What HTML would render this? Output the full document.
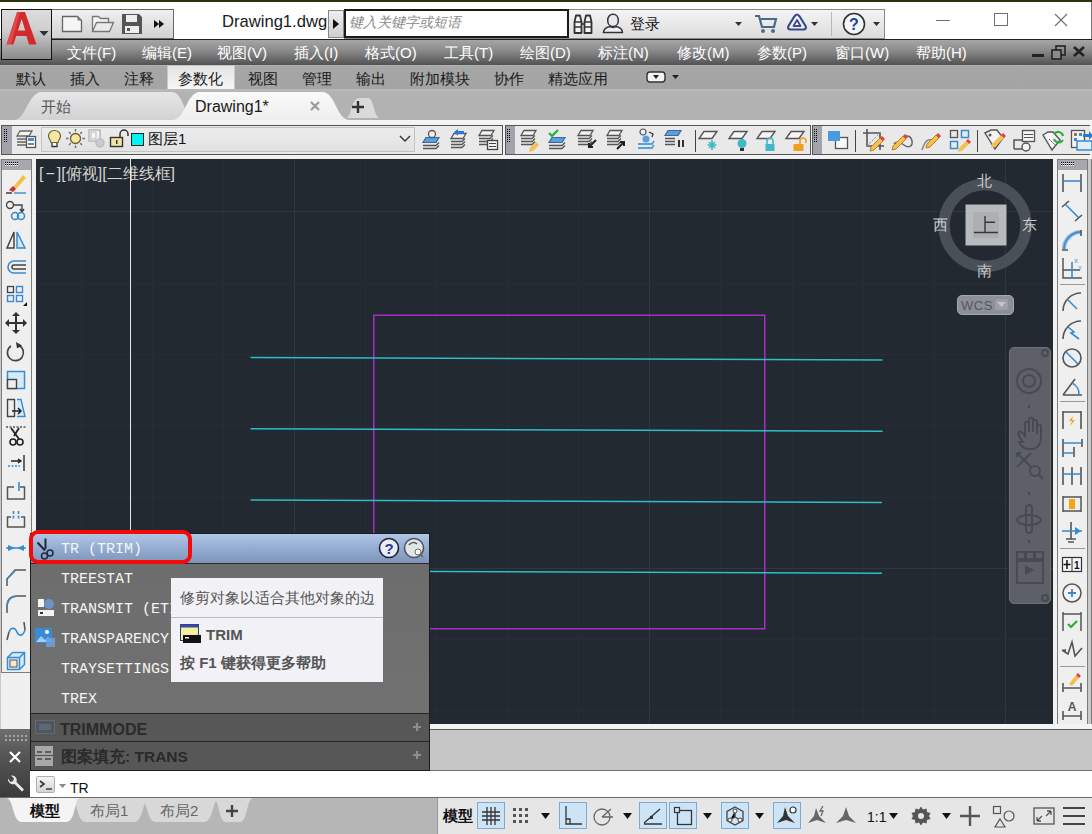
<!DOCTYPE html>
<html><head><meta charset="utf-8">
<style>
*{margin:0;padding:0;box-sizing:border-box}
html,body{width:1092px;height:834px;overflow:hidden;background:#c8c8c8;font-family:"Liberation Sans",sans-serif}
.a{position:absolute}
.t{position:absolute;white-space:nowrap;line-height:1}
svg{position:absolute;overflow:visible}
#top{left:0;top:0;width:1092px;height:2px;background:#2c3310}
#title{left:0;top:2px;width:1092px;height:37px;background:#fff}
#logo{left:1px;top:9px;width:51px;height:51px;border:1.5px solid #111;background:linear-gradient(#dcdcdc,#cfcfcf 40%,#8a8a8a)}
#qat{left:52px;top:9px;width:122px;height:30px;border:1px solid #666;border-left:none;background:linear-gradient(#f0f0f0,#d2d2d2)}
#menu{left:0px;top:39px;width:1092px;height:26px;background:linear-gradient(#a6a6a6,#8c8c8c 40%,#525252);border-top:1px solid #1e1e1e}
.mi{color:#fff;font-size:15px;top:45px}
#rtabs{left:0;top:65px;width:1092px;height:24px;background:linear-gradient(#b2b2b2,#a6a6a6 2px,#a4a4a4)}
.rt{color:#1a1a1a;font-size:15px;top:71px}
#ftabs{left:0;top:89px;width:1092px;height:31px;background:linear-gradient(#bababa,#b2b2b2 4px,#b2b2b2)}
#ltb{left:0;top:120px;width:1092px;height:38px;background:#ececec}
</style></head><body>
<div id="top" class="a"></div>
<div id="title" class="a"></div>
<div id="qat" class="a"></div>
<!-- QAT icons -->
<svg style="left:60px;top:14px" width="24" height="20" viewBox="0 0 24 20"><path d="M2.5 2.5h15l4 4v11h-19z" fill="#f6f6f6" stroke="#666" stroke-width="1.3"/><path d="M17.5 2.5v4h4z" fill="#777"/></svg>
<svg style="left:90px;top:13px" width="26" height="21" viewBox="0 0 26 21"><path d="M2.5 18.5v-15h6l2 2h8v4" fill="#f4f4f4" stroke="#777" stroke-width="1.3"/><path d="M2.5 18.5l4-9h17l-4 9z" fill="#eaeaea" stroke="#777" stroke-width="1.3"/></svg>
<svg style="left:121px;top:13px" width="22" height="22" viewBox="0 0 22 22"><path d="M1 1h17l3 3v17h-20z" fill="#555"/><rect x="5" y="2" width="11" height="7" fill="#eee"/><rect x="4" y="13" width="14" height="7" fill="#eee"/><rect x="6" y="15" width="3" height="3" fill="#555"/></svg>
<svg style="left:153px;top:19px" width="12" height="10" viewBox="0 0 12 10"><path d="M1 1l5 4-5 4zM6 1l5 4-5 4z" fill="#111"/></svg>

<div class="t" style="left:222px;top:14px;font-size:16.6px;color:#1a1a1a">Drawing1.dwg</div>
<div class="a" style="left:328px;top:10px;width:16px;height:28px;background:linear-gradient(#eee,#cfcfcf);border:1px solid #888"></div>
<svg style="left:333px;top:19px" width="6" height="10" viewBox="0 0 6 10"><path d="M0 0l6 5-6 5z" fill="#111"/></svg>
<div class="a" style="left:344px;top:9px;width:541px;height:30px;background:linear-gradient(#f4f4f4,#dcdcdc);border:1px solid #888;border-left:none"></div>
<div class="a" style="left:344px;top:9px;width:225px;height:29px;background:#fff;border:2px solid #1a1a1a"></div>
<div class="t" style="left:349px;top:15px;font-size:14px;color:#8a8a8a;font-style:italic">键入关键字或短语</div>
<!-- binoculars -->
<svg style="left:572px;top:14px" width="22" height="20" viewBox="0 0 22 20"><path d="M2.5 19V8l1.5-6.5h4L9.5 8v11z M12.5 19V8l1.5-6.5h4L19.5 8v11z" fill="#f4f4f4" stroke="#333" stroke-width="1.8" stroke-linejoin="round"/><path d="M3 8h6M13 8h6M3 13h6M13 13h6M9 10h4" stroke="#333" stroke-width="1.6"/></svg>
<svg style="left:602px;top:13px" width="22" height="21" viewBox="0 0 22 21"><path d="M11 1.2c3.2 0 5.3 2.6 5.3 6.2 0 3.2-1.8 6-5.3 6s-5.3-2.8-5.3-6c0-3.6 2.1-6.2 5.3-6.2z" fill="#e8eaf0" stroke="#333" stroke-width="1.5"/><path d="M1.5 19.5c0-3.5 3.5-5.3 6.5-6 1.5 1.2 4.5 1.2 6 0 3 .7 6.5 2.5 6.5 6z" fill="#eef0f4" stroke="#333" stroke-width="1.5"/></svg>
<div class="t" style="left:630px;top:16px;font-size:15px;color:#111">登录</div>
<svg style="left:735px;top:22px" width="7" height="4" viewBox="0 0 7 4"><path d="M0 0h7l-3.5 4z" fill="#333"/></svg>
<svg style="left:754px;top:13px" width="24" height="21" viewBox="0 0 24 21"><path d="M1 3h4l3 11h12l2-8H7" fill="none" stroke="#4a6a8a" stroke-width="2.2"/><circle cx="9" cy="18" r="2" fill="#4a6a8a"/><circle cx="19" cy="18" r="2" fill="#4a6a8a"/></svg>
<svg style="left:785px;top:12px" width="24" height="20" viewBox="0 0 24 20"><path d="M12 2.5c1.5 0 2 1 3 2.5l5.5 9c1 1.8.3 3.5-2 3.5H5.5c-2.3 0-3-1.7-2-3.5L9 5c1-1.5 1.5-2.5 3-2.5z" fill="#f0f2fa" stroke="#3a4a8a" stroke-width="2.2"/><path d="M12 8l-3.5 6h7z" fill="#fff" stroke="#3a4a8a" stroke-width="1.8" stroke-linejoin="round"/></svg>
<svg style="left:811px;top:22px" width="7" height="4" viewBox="0 0 7 4"><path d="M0 0h7l-3.5 4z" fill="#333"/></svg>
<div class="a" style="left:831px;top:12px;width:1px;height:24px;background:#b8b8b8"></div>
<svg style="left:842px;top:12px" width="24" height="24" viewBox="0 0 24 24"><circle cx="12" cy="12" r="10.5" fill="#f4f6fa" stroke="#333" stroke-width="1.6"/><text x="12" y="18" font-size="16" font-weight="bold" text-anchor="middle" fill="#2040a0" font-family="Liberation Sans">?</text></svg>
<svg style="left:873px;top:22px" width="7" height="4" viewBox="0 0 7 4"><path d="M0 0h7l-3.5 4z" fill="#333"/></svg>
<!-- window controls -->
<div class="a" style="left:936px;top:20px;width:14px;height:1px;background:#707070"></div>
<div class="a" style="left:994px;top:13px;width:14px;height:13px;border:1px solid #707070"></div>
<svg style="left:1054px;top:13px" width="14" height="14" viewBox="0 0 14 14"><path d="M1 1l12 12M13 1L1 13" stroke="#707070" stroke-width="1.1"/></svg>
<div class="a" style="left:1091px;top:2px;width:1px;height:832px;background:#7a7a7a"></div>
<!-- menu -->
<div id="menu" class="a"></div>
<div class="t mi" style="left:67px">文件(F)</div>
<div class="t mi" style="left:142px">编辑(E)</div>
<div class="t mi" style="left:217px">视图(V)</div>
<div class="t mi" style="left:294px">插入(I)</div>
<div class="t mi" style="left:365px">格式(O)</div>
<div class="t mi" style="left:444px">工具(T)</div>
<div class="t mi" style="left:520px">绘图(D)</div>
<div class="t mi" style="left:598px">标注(N)</div>
<div class="t mi" style="left:677px">修改(M)</div>
<div class="t mi" style="left:757px">参数(P)</div>
<div class="t mi" style="left:835px">窗口(W)</div>
<div class="t mi" style="left:916px">帮助(H)</div>
<div class="a" style="left:1032px;top:54px;width:12px;height:3px;background:#222"></div>
<svg style="left:1051px;top:45px" width="16" height="16" viewBox="0 0 16 16"><rect x="5" y="1" width="9" height="9" fill="none" stroke="#222" stroke-width="1.6"/><rect x="1" y="5" width="9" height="9" fill="#8a8a8a" stroke="#222" stroke-width="1.6"/></svg>
<svg style="left:1073px;top:46px" width="12" height="11" viewBox="0 0 12 11"><path d="M1 1l10 9M11 1L1 10" stroke="#222" stroke-width="2.6"/></svg>
<div id="logo" class="a"></div>
<svg style="left:0;top:0" width="54" height="60" viewBox="0 0 54 60"><path d="M6.5 44.5L17 12h8l11.5 32.5h-7.5l-2.6-8.5H16.2l-2.8 8.5z M18 30.5h7.2L21.7 19z" fill="#d42a2e" fill-rule="evenodd"/><path d="M6.5 44.5L17 12h3L11 44.5z" fill="#f06a6a" opacity=".45"/><path d="M39.5 31h9l-4.5 5z" fill="#2a2f38"/></svg>
<!-- ribbon tabs -->
<div id="rtabs" class="a"></div>
<div class="a" style="left:167px;top:65px;width:68px;height:24px;background:linear-gradient(#e4e4e4,#f6f6f6);border:1px solid #c8c8c8;border-bottom:none"></div>
<div class="t rt" style="left:16px">默认</div>
<div class="t rt" style="left:70px">插入</div>
<div class="t rt" style="left:124px">注释</div>
<div class="t rt" style="left:178px">参数化</div>
<div class="t rt" style="left:248px">视图</div>
<div class="t rt" style="left:302px">管理</div>
<div class="t rt" style="left:356px">输出</div>
<div class="t rt" style="left:410px">附加模块</div>
<div class="t rt" style="left:494px">协作</div>
<div class="t rt" style="left:548px">精选应用</div>
<svg style="left:646px;top:71px" width="20" height="12" viewBox="0 0 20 12"><rect x="1" y="1" width="18" height="10" rx="3" fill="#f4f4f4" stroke="#333" stroke-width="1.4"/><path d="M7 4h6l-3 4z" fill="#222"/></svg>
<svg style="left:672px;top:75px" width="7" height="4" viewBox="0 0 7 4"><path d="M0 0h7l-3.5 4z" fill="#222"/></svg>
<!-- file tabs -->
<div id="ftabs" class="a"></div>
<svg style="left:0;top:89px" width="400" height="32" viewBox="0 0 400 32">
<defs><linearGradient id="g1" x1="0" y1="0" x2="0" y2="1"><stop offset="0" stop-color="#e6e6e6"/><stop offset="1" stop-color="#d2d2d2"/></linearGradient>
<linearGradient id="g2" x1="0" y1="0" x2="0" y2="1"><stop offset="0" stop-color="#fafafa"/><stop offset="1" stop-color="#eeeeee"/></linearGradient></defs>
<path d="M14 31C26 31 28 3 42 3H172C184 3 184 31 196 31z" fill="url(#g1)"/>
<path d="M172 31C186 31 186 3 200 3H322C336 3 336 31 350 31z" fill="url(#g2)"/>
<path d="M346 29C352 29 350 9 360 9H368C374 9 374 29 380 29z" fill="#dadada"/>
</svg>
<div class="t" style="left:41px;top:99px;font-size:15px;color:#555">开始</div>
<div class="t" style="left:195px;top:99px;font-size:16px;color:#1a1a1a">Drawing1*</div>
<svg style="left:310px;top:101px" width="10" height="10" viewBox="0 0 10 10"><path d="M1 1l8 8M9 1L1 9" stroke="#9a9a9a" stroke-width="2.2"/></svg>
<svg style="left:352px;top:101px" width="12" height="12" viewBox="0 0 12 12"><path d="M6 0v12M0 6h12" stroke="#333" stroke-width="2.4"/></svg>
<div class="a" style="left:0;top:120px;width:1092px;height:4px;background:#f4f4f4"></div>
<!-- layer toolbar -->
<div class="a" style="left:0;top:124px;width:1092px;height:35px;background:#f2f2f2"></div>
<div class="a" style="left:1px;top:125px;width:502px;height:30px;background:#e9e9e9;border:1px solid #555"></div>
<div class="a" style="left:505px;top:125px;width:306px;height:30px;background:#e9e9e9;border:1px solid #555"></div>
<div class="a" style="left:812px;top:125px;width:278px;height:30px;background:#e9e9e9;border:1px solid #555;border-right:none"></div>
<div class="a" style="left:2px;top:126px;width:10px;height:28px;background:#a2a2aa"></div><svg style="left:2px;top:126px" width="10" height="28"><rect x="2" y="3" width="1" height="1" fill="#000"/><rect x="4" y="3" width="1" height="1" fill="#000"/><rect x="2" y="5" width="1" height="1" fill="#000"/><rect x="4" y="5" width="1" height="1" fill="#000"/><rect x="2" y="7" width="1" height="1" fill="#000"/><rect x="4" y="7" width="1" height="1" fill="#000"/><rect x="2" y="9" width="1" height="1" fill="#000"/><rect x="4" y="9" width="1" height="1" fill="#000"/><rect x="2" y="11" width="1" height="1" fill="#000"/><rect x="4" y="11" width="1" height="1" fill="#000"/><rect x="2" y="13" width="1" height="1" fill="#000"/><rect x="4" y="13" width="1" height="1" fill="#000"/><rect x="2" y="15" width="1" height="1" fill="#000"/><rect x="4" y="15" width="1" height="1" fill="#000"/></svg>
<div class="a" style="left:506px;top:126px;width:9px;height:28px;background:#a2a2aa"></div><svg style="left:506px;top:126px" width="9" height="28"><rect x="1" y="3" width="1" height="1" fill="#000"/><rect x="3" y="3" width="1" height="1" fill="#000"/><rect x="1" y="5" width="1" height="1" fill="#000"/><rect x="3" y="5" width="1" height="1" fill="#000"/><rect x="1" y="7" width="1" height="1" fill="#000"/><rect x="3" y="7" width="1" height="1" fill="#000"/><rect x="1" y="9" width="1" height="1" fill="#000"/><rect x="3" y="9" width="1" height="1" fill="#000"/><rect x="1" y="11" width="1" height="1" fill="#000"/><rect x="3" y="11" width="1" height="1" fill="#000"/><rect x="1" y="13" width="1" height="1" fill="#000"/><rect x="3" y="13" width="1" height="1" fill="#000"/><rect x="1" y="15" width="1" height="1" fill="#000"/><rect x="3" y="15" width="1" height="1" fill="#000"/></svg>
<div class="a" style="left:813px;top:126px;width:9px;height:28px;background:#a2a2aa"></div><svg style="left:813px;top:126px" width="9" height="28"><rect x="1" y="3" width="1" height="1" fill="#000"/><rect x="3" y="3" width="1" height="1" fill="#000"/><rect x="1" y="5" width="1" height="1" fill="#000"/><rect x="3" y="5" width="1" height="1" fill="#000"/><rect x="1" y="7" width="1" height="1" fill="#000"/><rect x="3" y="7" width="1" height="1" fill="#000"/><rect x="1" y="9" width="1" height="1" fill="#000"/><rect x="3" y="9" width="1" height="1" fill="#000"/><rect x="1" y="11" width="1" height="1" fill="#000"/><rect x="3" y="11" width="1" height="1" fill="#000"/><rect x="1" y="13" width="1" height="1" fill="#000"/><rect x="3" y="13" width="1" height="1" fill="#000"/><rect x="1" y="15" width="1" height="1" fill="#000"/><rect x="3" y="15" width="1" height="1" fill="#000"/></svg>
<!-- layer props icon -->
<svg style="left:15px;top:129px" width="22" height="20" viewBox="0 0 22 20"><path d="M5 2h12l-3 5H2z" fill="#f4f4f4" stroke="#666" stroke-width="1.3"/><path d="M2 10h9M2 13h9M2 16h9" stroke="#666" stroke-width="1.5"/><rect x="11.5" y="7.5" width="9" height="11" fill="#fff" stroke="#555" stroke-width="1.3"/><rect x="13" y="9" width="6" height="3" fill="#4a90d0"/><path d="M13 15h6" stroke="#333" stroke-width="1.2"/></svg>
<div class="a" style="left:41px;top:127px;width:374px;height:25px;background:linear-gradient(#ececec,#e2e2e2);border:1px solid #c4c4c4"></div>
<svg style="left:47px;top:129px" width="15" height="20" viewBox="0 0 15 20"><path d="M7.5 1.5c3.5 0 6 2.5 6 5.5 0 2.5-2 4-2.5 6.5h-7C3.5 11 1.5 9.5 1.5 7c0-3 2.5-5.5 6-5.5z" fill="#f7e7a0" stroke="#6a6030" stroke-width="1.2"/><path d="M5 14v3.5h5V14" fill="#fff" stroke="#333" stroke-width="1.3"/></svg>
<svg style="left:66px;top:129px" width="19" height="19" viewBox="0 0 19 19"><circle cx="9.5" cy="9.5" r="5" fill="#f7e7a0" stroke="#6a6030" stroke-width="1.3"/><path d="M9.5 0v2.5M9.5 16.5V19M0 9.5h2.5M16.5 9.5H19M3 3l1.7 1.7M14.3 14.3L16 16M3 16l1.7-1.7M14.3 4.7L16 3" stroke="#6a6a80" stroke-width="1.4"/></svg>
<svg style="left:88px;top:129px" width="18" height="20" viewBox="0 0 18 20"><rect x="1" y="1" width="11" height="11" fill="#f4f4f4" stroke="#aaa" stroke-width="1.2"/><rect x="3" y="3" width="5" height="7" fill="none" stroke="#bbb"/><circle cx="12" cy="14" r="4" fill="#ccc" stroke="#bbb" stroke-width="1.5"/></svg>
<svg style="left:109px;top:129px" width="20" height="19" viewBox="0 0 20 19"><path d="M11 8V5a4 4 0 0 1 8 0v2" fill="none" stroke="#333" stroke-width="1.5"/><rect x="1.5" y="8.5" width="12" height="9" fill="#f2e6a0" stroke="#333" stroke-width="1.4"/><rect x="7" y="11" width="1.5" height="4" fill="#333"/></svg>
<div class="a" style="left:131px;top:133px;width:13px;height:13px;background:#00f4f4;border:1px solid #222"></div>
<div class="t" style="left:148px;top:131px;font-size:15px;color:#111">图层1</div>
<svg style="left:399px;top:135px" width="12" height="7" viewBox="0 0 12 7"><path d="M1 1l5 5 5-5" fill="none" stroke="#333" stroke-width="1.4"/></svg>
<svg width="0" height="0" style="position:absolute">
<defs>
<symbol id="stk" viewBox="0 0 24 24"><path d="M6 2.5h12l-3 5H3z" fill="#f2f2f2" stroke="#555" stroke-width="1.3"/><path d="M3 10.5h11l3-3M3 13.5h11l3-3M3 16.5h11l3-3" fill="none" stroke="#555" stroke-width="1.3"/></symbol>
<symbol id="stkb" viewBox="0 0 24 24"><path d="M6 9.5h13l-3 5H3z" fill="#5aa0e0" stroke="#3a6a9a" stroke-width="1.2"/><path d="M3 17.5h13l3-3M3 20.5h13l3-3" fill="none" stroke="#555" stroke-width="1.3"/></symbol>
<symbol id="par" viewBox="0 0 24 24"><path d="M7 3.5h13l-5 7H2z" fill="#f6f6f6" stroke="#555" stroke-width="1.4"/></symbol>
<symbol id="pen" viewBox="0 0 24 24"><path d="M9 19l9-9 3 3-9 9-4 1z" fill="#f4c050" stroke="#c08020" stroke-width="1"/><path d="M18 10l2-2 3 3-2 2z" fill="#e04040"/></symbol>
</defs></svg>
<svg style="left:420px;top:128px" width="24" height="24"><use href="#stkb"/><circle cx="12" cy="6" r="3.5" fill="#f4f4f4" stroke="#555" stroke-width="1.3"/></svg>
<svg style="left:448px;top:128px" width="24" height="24"><use href="#stk" y="3"/><path d="M6 4l4-3v2h6v3h-6v2z" fill="#2a7ad0"/></svg>
<svg style="left:476px;top:128px" width="24" height="24"><use href="#stk"/><rect x="11.5" y="12.5" width="10" height="9" fill="#f4f4f4" stroke="#444" stroke-width="1.3"/><path d="M13 15.5h7M13 18.5h7" stroke="#444"/></svg>
<div class="a" style="left:695px;top:130px;width:1px;height:22px;background:#444"></div>
<svg style="left:518px;top:128px" width="24" height="24"><use href="#stk"/><path d="M12 20l6-6 3 3-6 6-4 1z" fill="#f4c050"/></svg>
<svg style="left:546px;top:128px" width="24" height="24"><use href="#stkb"/><path d="M3 5l3 3 6-6" fill="none" stroke="#20b040" stroke-width="2.2"/></svg>
<svg style="left:575px;top:128px" width="24" height="24"><use href="#stk"/><path d="M21 12l-7 7M14 15v4h4" fill="none" stroke="#222" stroke-width="2"/></svg>
<svg style="left:604px;top:128px" width="24" height="24"><use href="#stk"/><path d="M13 21l7-7M16 14h4v4" fill="none" stroke="#222" stroke-width="2"/></svg>
<svg style="left:634px;top:128px" width="24" height="24"><circle cx="9" cy="4" r="3" fill="#eee" stroke="#555" stroke-width="1.2"/><circle cx="12" cy="11" r="3.5" fill="#5aa0e0"/><path d="M4 16h14l2-3M4 20h14l2-3" fill="none" stroke="#5aa0e0" stroke-width="1.8"/><path d="M15 4l4 2-1 3" fill="none" stroke="#333" stroke-width="1.3"/></svg>
<svg style="left:662px;top:128px" width="24" height="24"><path d="M6 2.5h13l-3 5H3z" fill="#5aa0e0" stroke="#3a6a9a" stroke-width="1.2"/><path d="M3 10.5h10M3 13.5h10M3 16.5h10" stroke="#555" stroke-width="1.3"/><path d="M16 12h2v7h-2zM20 12h2v7h-2z" fill="#333"/></svg>
<svg style="left:697px;top:128px" width="24" height="24"><use href="#par"/><path d="M15 12v10M10.5 17h9M12 14l6 6M18 14l-6 6" stroke="#40b8c8" stroke-width="1.6"/></svg>
<svg style="left:727px;top:128px" width="24" height="24"><use href="#par"/><circle cx="15" cy="15.5" r="4.5" fill="#40b8c8"/><rect x="13" y="20" width="4" height="3" fill="#333"/></svg>
<svg style="left:755px;top:128px" width="24" height="24"><use href="#par"/><path d="M12 16v-3a3 3 0 0 1 6 0v3" fill="none" stroke="#40b8c8" stroke-width="1.6"/><rect x="10.5" y="16" width="9" height="7" fill="#40b8c8"/></svg>
<svg style="left:784px;top:128px" width="24" height="24"><use href="#par"/><path d="M16 16v-3a3 3 0 0 1 6 0v2" fill="none" stroke="#f0a020" stroke-width="1.6"/><rect x="9.5" y="16" width="10" height="7" fill="#f0a020"/></svg>
<!-- toolbar 3 -->
<svg style="left:826px;top:128px" width="24" height="24"><rect x="9.5" y="9.5" width="12" height="11" fill="#fafafa" stroke="#555" stroke-width="1.3"/><rect x="2" y="3" width="12" height="10" fill="#4a9ae0"/></svg>
<div class="a" style="left:855px;top:130px;width:1px;height:22px;background:#444"></div>
<svg style="left:862px;top:128px" width="24" height="24"><path d="M5 1v17h17M1 5h17v17" fill="none" stroke="#555" stroke-width="1.6"/><path d="M5 18L18 5" stroke="#888" stroke-dasharray="2 1.5"/><use href="#pen"/></svg>
<svg style="left:891px;top:128px" width="24" height="24"><path d="M3 16c2-3 6-2 10 1s9 2 8-4-6-5-6-5" fill="none" stroke="#666" stroke-width="1.5"/><path d="M2 18l10-10 3 3-10 10-4 1z" fill="#f4c050" stroke="#c08020"/><path d="M12 8l2-2 3 3-2 2z" fill="#e04040"/></svg>
<svg style="left:920px;top:128px" width="24" height="24"><path d="M2 22c2-6 4-9 6-10s5 2 9-4" fill="none" stroke="#888" stroke-width="1.5"/><path d="M7 16l9-9 3 3-9 9-4 1z" fill="#f4c050" stroke="#c08020"/><path d="M16 7l2-2 3 3-2 2z" fill="#e04040"/></svg>
<svg style="left:948px;top:128px" width="24" height="24"><rect x="2.5" y="2.5" width="7" height="7" fill="none" stroke="#555" stroke-width="1.3"/><rect x="13.5" y="2.5" width="7" height="7" fill="none" stroke="#3a8ad0" stroke-width="1.5"/><rect x="2.5" y="13.5" width="7" height="7" fill="none" stroke="#3a8ad0" stroke-width="1.5"/><path d="M11 20l7-7 3 3-7 7-4 1z" fill="#f4c050"/><path d="M18 13l2-2 3 3-2 2z" fill="#e04040"/></svg>
<div class="a" style="left:977px;top:130px;width:1px;height:22px;background:#444"></div>
<svg style="left:983px;top:128px" width="24" height="24"><path d="M2 5l6-3h6l6 8-8 11z" fill="#f4f4f4" stroke="#555" stroke-width="1.4"/><circle cx="7" cy="7" r="1.5" fill="#555"/><path d="M9 16l9-9 3 3-9 9-4 1z" fill="#f4c050"/><path d="M18 7l2-2 3 3-2 2z" fill="#e04040"/></svg>
<svg style="left:1012px;top:128px" width="24" height="24"><rect x="10.5" y="2.5" width="12" height="11" fill="#f4f4f4" stroke="#555" stroke-width="1.3"/><path d="M12 6.5h9M12 9.5h9" stroke="#555"/><path d="M2 21V12h8M2 21h10" fill="none" stroke="#555" stroke-width="1.5"/><circle cx="14" cy="19" r="4" fill="#f4f4f4" stroke="#555" stroke-width="1.4"/></svg>
<svg style="left:1041px;top:128px" width="24" height="24"><path d="M2 7l5-3h5l7 8-8 10z" fill="#f4f4f4" stroke="#555" stroke-width="1.4"/><path d="M8 11l6 6" stroke="#555" stroke-dasharray="2 1"/><path d="M13 6a5 5 0 0 1 9 2M22 12a5 5 0 0 1-9-1" fill="none" stroke="#30b040" stroke-width="2.2"/></svg>
<svg style="left:1069px;top:128px" width="24" height="24"><rect x="2.5" y="2.5" width="13" height="17" fill="#f4f4f4" stroke="#555" stroke-width="1.3"/><rect x="5" y="5" width="3" height="3" fill="#a07040"/><rect x="10" y="5" width="3" height="3" fill="#3a8ad0"/><rect x="5" y="10" width="3" height="3" fill="#3a8ad0"/><rect x="8" y="13" width="15" height="9" fill="#dfeefa" stroke="#3a8ad0" stroke-width="1.5"/><path d="M14 6h6v-3l4 4.5-4 4.5v-3h-6z" fill="#2a7ad0"/></svg>
<!-- canvas -->
<div class="a" style="left:32px;top:158px;width:1025px;height:571px;background:#f0f0f0"></div>
<div class="a" style="left:36px;top:159px;width:1017px;height:565px;background:#222930"></div>
<svg style="left:36px;top:159px" width="1017" height="565"><rect x="45" y="0" width="1" height="565" fill="#262d35"/><rect x="116" y="0" width="1" height="565" fill="#262d35"/><rect x="187" y="0" width="1" height="565" fill="#262d35"/><rect x="258" y="0" width="1" height="565" fill="#30373f"/><rect x="329" y="0" width="1" height="565" fill="#262d35"/><rect x="400" y="0" width="1" height="565" fill="#262d35"/><rect x="471" y="0" width="1" height="565" fill="#262d35"/><rect x="542" y="0" width="1" height="565" fill="#262d35"/><rect x="613" y="0" width="1" height="565" fill="#30373f"/><rect x="684" y="0" width="1" height="565" fill="#262d35"/><rect x="756" y="0" width="1" height="565" fill="#262d35"/><rect x="827" y="0" width="1" height="565" fill="#262d35"/><rect x="898" y="0" width="1" height="565" fill="#262d35"/><rect x="969" y="0" width="1" height="565" fill="#30373f"/><rect x="0" y="52" width="1017" height="1" fill="#30373f"/><rect x="0" y="124" width="1017" height="1" fill="#262d35"/><rect x="0" y="195" width="1017" height="1" fill="#262d35"/><rect x="0" y="266" width="1017" height="1" fill="#262d35"/><rect x="0" y="338" width="1017" height="1" fill="#262d35"/><rect x="0" y="409" width="1017" height="1" fill="#30373f"/><rect x="0" y="480" width="1017" height="1" fill="#262d35"/><rect x="0" y="551" width="1017" height="1" fill="#262d35"/></svg><div class="t" style="left:39px;top:166px;font-size:16px;color:#d4d4d4">[<span style="padding:0 2px">−</span>][俯视][二维线框]</div>
<div class="a" style="left:130px;top:159px;width:1px;height:375px;background:#e8e8e8"></div>
<svg style="left:0;top:0" width="1092" height="834">
<rect x="373.75" y="315.25" width="391" height="313.5" fill="none" stroke="#a82cc6" stroke-width="1.5"/>
<path d="M250.5 357.5L882.5 360" stroke="#32bcc4" stroke-width="1.6"/>
<path d="M250.5 428.7L882.5 431.2" stroke="#32bcc4" stroke-width="1.6"/>
<path d="M250.5 500L882 502.5" stroke="#32bcc4" stroke-width="1.6"/>
<path d="M250.5 570.7L882 573.2" stroke="#32bcc4" stroke-width="1.6"/>
</svg>
<!-- compass -->
<svg style="left:930px;top:170px" width="110" height="150" viewBox="0 0 110 150">
<circle cx="55" cy="55.5" r="41" fill="none" stroke="#4a5058" stroke-width="11.5"/>
<rect x="35.5" y="34.5" width="41" height="41" fill="#b8bbbd"/><rect x="43" y="42" width="26" height="26" fill="#adb0b2"/><path d="M55 46v16.5M55 52.3h10M44 62.5h24" stroke="#363636" stroke-width="1.4"/>
</svg>

<div class="t" style="left:977px;top:173px;font-size:15px;color:#cccccc">北</div>
<div class="t" style="left:933px;top:217px;font-size:15px;color:#cccccc">西</div>
<div class="t" style="left:1022px;top:217px;font-size:15px;color:#cccccc">东</div>
<div class="t" style="left:977px;top:263px;font-size:15px;color:#cccccc">南</div>
<div class="a" style="left:957px;top:295px;width:57px;height:20px;background:#8d9096;border:1px solid #a4a6ac;border-radius:5px"></div>
<div class="t" style="left:961px;top:299px;font-size:13px;color:#55585e;letter-spacing:.5px">WCS</div>
<div class="a" style="left:995px;top:299px;width:13px;height:11px;background:#9ea0a6;border-radius:2px"></div>
<svg style="left:997px;top:302px" width="9" height="5" viewBox="0 0 9 5"><path d="M0 0h9l-4.5 5z" fill="#c4c6cc"/></svg>
<!-- nav bar -->
<div class="a" style="left:1009px;top:347px;width:42px;height:257px;background:#5d6167;border:1px solid #6d7177;border-radius:5px"></div>
<svg style="left:1009px;top:347px" width="42" height="257" viewBox="0 0 42 257">
<g fill="none" stroke="#474b51" stroke-width="2">
<circle cx="36" cy="6" r="3"/><circle cx="36" cy="251" r="3"/>
<circle cx="20" cy="34" r="12"/><circle cx="20" cy="34" r="6"/>
<path transform="translate(0,15)" d="M14 80c-3-4-6-8-4-10s5 3 6 4V62c0-3 4-3 4 0v8-12c0-3 4-3 4 0v12-10c0-3 4-3 4 0v12-7c0-3 4-3 4 0v10c0 6-3 12-9 12h-4c-4 0-7-3-9-7z"/>
<path d="M8 106l14 14M22 106L8 120M8 106h4M8 106v4"/><circle cx="26" cy="124" r="5"/><path d="M30 128l4 4"/>
<ellipse cx="20" cy="173" rx="12" ry="5"/><rect x="17" y="158" width="6" height="28" rx="3"/>
<rect x="8" y="205" width="8" height="7"/><rect x="17" y="205" width="8" height="7"/><rect x="26" y="205" width="8" height="7"/><rect x="8" y="214" width="26" height="22"/>
</g>
<g fill="#474b51"><path d="M16 228v-10l9 5z"/><rect x="19" y="58" width="2" height="3"/><rect x="19" y="145" width="2" height="3"/><rect x="19" y="193" width="2" height="3"/></g>
</svg>
<!-- left toolbar -->
<div class="a" style="left:1px;top:159px;width:31px;height:514px;background:#efefef;border:1px solid #7c7c7c"></div>
<div class="a" style="left:2px;top:160px;width:29px;height:10px;background:#a6a8ae"></div>
<svg style="left:5px;top:162px" width="16" height="6"><rect x="0" y="1" width="1" height="1" fill="#fff"/><rect x="0" y="0" width="1" height="1" fill="#000"/><rect x="2" y="1" width="1" height="1" fill="#fff"/><rect x="2" y="0" width="1" height="1" fill="#000"/><rect x="4" y="1" width="1" height="1" fill="#fff"/><rect x="4" y="0" width="1" height="1" fill="#000"/><rect x="6" y="1" width="1" height="1" fill="#fff"/><rect x="6" y="0" width="1" height="1" fill="#000"/><rect x="8" y="1" width="1" height="1" fill="#fff"/><rect x="8" y="0" width="1" height="1" fill="#000"/><rect x="10" y="1" width="1" height="1" fill="#fff"/><rect x="10" y="0" width="1" height="1" fill="#000"/><rect x="12" y="1" width="1" height="1" fill="#fff"/><rect x="12" y="0" width="1" height="1" fill="#000"/><rect x="0" y="3" width="1" height="1" fill="#fff"/><rect x="0" y="2" width="1" height="1" fill="#000"/><rect x="2" y="3" width="1" height="1" fill="#fff"/><rect x="2" y="2" width="1" height="1" fill="#000"/><rect x="4" y="3" width="1" height="1" fill="#fff"/><rect x="4" y="2" width="1" height="1" fill="#000"/><rect x="6" y="3" width="1" height="1" fill="#fff"/><rect x="6" y="2" width="1" height="1" fill="#000"/><rect x="8" y="3" width="1" height="1" fill="#fff"/><rect x="8" y="2" width="1" height="1" fill="#000"/><rect x="10" y="3" width="1" height="1" fill="#fff"/><rect x="10" y="2" width="1" height="1" fill="#000"/><rect x="12" y="3" width="1" height="1" fill="#fff"/><rect x="12" y="2" width="1" height="1" fill="#000"/></svg>
<div class="a" style="left:1px;top:673px;width:31px;height:56px;background:#f0f0f0"></div>
<!-- right toolbar -->
<div class="a" style="left:1057px;top:159px;width:31px;height:567px;background:#efefef;border:1px solid #7c7c7c"></div>
<div class="a" style="left:1058px;top:160px;width:29px;height:10px;background:#a6a8ae"></div>
<svg style="left:1061px;top:162px" width="16" height="6"><rect x="0" y="1" width="1" height="1" fill="#fff"/><rect x="0" y="0" width="1" height="1" fill="#000"/><rect x="2" y="1" width="1" height="1" fill="#fff"/><rect x="2" y="0" width="1" height="1" fill="#000"/><rect x="4" y="1" width="1" height="1" fill="#fff"/><rect x="4" y="0" width="1" height="1" fill="#000"/><rect x="6" y="1" width="1" height="1" fill="#fff"/><rect x="6" y="0" width="1" height="1" fill="#000"/><rect x="8" y="1" width="1" height="1" fill="#fff"/><rect x="8" y="0" width="1" height="1" fill="#000"/><rect x="10" y="1" width="1" height="1" fill="#fff"/><rect x="10" y="0" width="1" height="1" fill="#000"/><rect x="12" y="1" width="1" height="1" fill="#fff"/><rect x="12" y="0" width="1" height="1" fill="#000"/><rect x="0" y="3" width="1" height="1" fill="#fff"/><rect x="0" y="2" width="1" height="1" fill="#000"/><rect x="2" y="3" width="1" height="1" fill="#fff"/><rect x="2" y="2" width="1" height="1" fill="#000"/><rect x="4" y="3" width="1" height="1" fill="#fff"/><rect x="4" y="2" width="1" height="1" fill="#000"/><rect x="6" y="3" width="1" height="1" fill="#fff"/><rect x="6" y="2" width="1" height="1" fill="#000"/><rect x="8" y="3" width="1" height="1" fill="#fff"/><rect x="8" y="2" width="1" height="1" fill="#000"/><rect x="10" y="3" width="1" height="1" fill="#fff"/><rect x="10" y="2" width="1" height="1" fill="#000"/><rect x="12" y="3" width="1" height="1" fill="#fff"/><rect x="12" y="2" width="1" height="1" fill="#000"/></svg>
<div class="a" style="left:1060px;top:284px;width:25px;height:1px;background:#999"></div>
<div class="a" style="left:1060px;top:401px;width:25px;height:1px;background:#999"></div>
<div class="a" style="left:1060px;top:548px;width:25px;height:1px;background:#999"></div>
<div class="a" style="left:1060px;top:666px;width:25px;height:1px;background:#999"></div>
<!-- left toolbar icons: 22x22 boxes centered x=16 -->
<svg style="left:5px;top:173px" width="22" height="22" viewBox="0 0 22 22"><path d="M8 14L18 2l3 3-10 11z" fill="#f2c04a"/><path d="M4 17l4-4 3 3-3 3z" fill="#c83040"/><path d="M1 20h6" stroke="#333" stroke-width="1.4"/><path d="M9 20h12" stroke="#3a8ad0" stroke-width="1.4"/></svg>
<svg style="left:5px;top:200px" width="22" height="22" viewBox="0 0 22 22"><circle cx="5" cy="5" r="3.5" fill="none" stroke="#444" stroke-width="1.4"/><path d="M9 5h8v6M15 9l2 3 2-3" fill="none" stroke="#444" stroke-width="1.4"/><circle cx="10" cy="16" r="3.5" fill="none" stroke="#3a8ad0" stroke-width="1.6"/><circle cx="16" cy="16" r="3.5" fill="none" stroke="#3a8ad0" stroke-width="1.6"/></svg>
<svg style="left:5px;top:229px" width="22" height="22" viewBox="0 0 22 22"><path d="M9 3L2 19h7z" fill="none" stroke="#444" stroke-width="1.5"/><path d="M12 3l8 16h-8z" fill="#cfe6f8" stroke="#3a8ad0" stroke-width="1.5"/></svg>
<svg style="left:5px;top:256px" width="22" height="22" viewBox="0 0 22 22"><path d="M21 5H9a6 6 0 0 0 0 12h12" fill="none" stroke="#3a8ad0" stroke-width="1.6"/><path d="M21 9H9a2 2 0 0 0 0 4h12" fill="none" stroke="#444" stroke-width="1.5"/></svg>
<svg style="left:5px;top:284px" width="22" height="22" viewBox="0 0 22 22"><rect x="2.5" y="2.5" width="6" height="6" fill="none" stroke="#444" stroke-width="1.3"/><rect x="11.5" y="2.5" width="6" height="6" fill="none" stroke="#3a8ad0" stroke-width="1.4"/><rect x="2.5" y="11.5" width="6" height="6" fill="none" stroke="#3a8ad0" stroke-width="1.4"/><rect x="11.5" y="11.5" width="6" height="6" fill="none" stroke="#3a8ad0" stroke-width="1.4"/><path d="M22 18v4h-4z" fill="#111"/></svg>
<svg style="left:5px;top:312px" width="22" height="22" viewBox="0 0 22 22"><path d="M11 2v18M2 11h18" stroke="#333" stroke-width="2"/><path d="M11 0l-4 4h8zM11 22l-4-4h8zM0 11l4-4v8zM22 11l-4-4v8z" fill="#333"/></svg>
<svg style="left:5px;top:341px" width="22" height="22" viewBox="0 0 22 22"><path d="M14 4.5A8 8 0 1 1 6 5" fill="none" stroke="#444" stroke-width="1.6"/><path d="M11 1l6 3.5-5 3z" fill="#333"/></svg>
<svg style="left:5px;top:369px" width="22" height="22" viewBox="0 0 22 22"><rect x="2.5" y="2.5" width="17" height="17" fill="#d6ebfa" stroke="#3a8ad0" stroke-width="1.5"/><rect x="2.5" y="10.5" width="9" height="9" fill="#eee" stroke="#444" stroke-width="1.4"/></svg>
<svg style="left:5px;top:397px" width="22" height="22" viewBox="0 0 22 22"><path d="M2.5 2.5h7v17h-7z" fill="none" stroke="#444" stroke-width="1.4"/><path d="M12 2.5h4l4 17h-8" fill="#d6ebfa" stroke="#3a8ad0" stroke-width="1.4"/><path d="M7 14h9M13 11l3 3-3 3" fill="none" stroke="#222" stroke-width="1.5"/></svg>
<svg style="left:5px;top:425px" width="22" height="22" viewBox="0 0 22 22"><path d="M1 2h20" stroke="#555" stroke-dasharray="2 1.5" stroke-width="1.3"/><path d="M6 3l8 11M14 3l-5 8" stroke="#222" stroke-width="1.8"/><circle cx="8" cy="17" r="3" fill="none" stroke="#222" stroke-width="1.6"/><circle cx="15" cy="17" r="3" fill="none" stroke="#222" stroke-width="1.6"/></svg>
<svg style="left:5px;top:452px" width="22" height="22" viewBox="0 0 22 22"><path d="M19 3v16" stroke="#444" stroke-width="1.6"/><path d="M3 14h12" stroke="#3a8ad0" stroke-dasharray="2 1.5" stroke-width="1.5"/><path d="M6 9h10M13 7l3 2-3 2" fill="none" stroke="#222" stroke-width="1.4"/></svg>
<svg style="left:5px;top:480px" width="22" height="22" viewBox="0 0 22 22"><path d="M9 7H2.5v12h17V7H15" fill="none" stroke="#555" stroke-width="1.5"/><path d="M14 2v9" stroke="#3a8ad0" stroke-width="1.6"/></svg>
<svg style="left:5px;top:508px" width="22" height="22" viewBox="0 0 22 22"><path d="M6 9H2.5v10h17V9H16" fill="none" stroke="#555" stroke-width="1.5"/><path d="M8.5 3v8M13.5 3v8" stroke="#3a8ad0" stroke-width="1.6" stroke-dasharray="3 1.5"/></svg>
<svg style="left:5px;top:537px" width="22" height="22" viewBox="0 0 22 22"><path d="M1 11h20" stroke="#3a8ad0" stroke-width="1.5"/><path d="M3 8l7 3-7 3zM19 8l-7 3 7 3z" fill="#3a8ad0"/></svg>
<svg style="left:5px;top:565px" width="22" height="22" viewBox="0 0 22 22"><path d="M2 21v-7l8-9h11" fill="none" stroke="#555" stroke-width="1.5"/><path d="M3 13l7-7" stroke="#3a8ad0" stroke-width="1.6"/></svg>
<svg style="left:5px;top:592px" width="22" height="22" viewBox="0 0 22 22"><path d="M2 21V13a9 9 0 0 1 9-9h10" fill="none" stroke="#555" stroke-width="1.5"/><path d="M2.5 12a9 9 0 0 1 8-7.5" fill="none" stroke="#3a8ad0" stroke-width="1.6"/></svg>
<svg style="left:5px;top:620px" width="22" height="22" viewBox="0 0 22 22"><path d="M2 20l2-8M19 2l1 8" stroke="#555" stroke-width="1.6"/><path d="M4 12c2-5 6-5 8 0s6 4 8-2" fill="none" stroke="#3a8ad0" stroke-width="1.6"/></svg>
<svg style="left:5px;top:649px" width="22" height="22" viewBox="0 0 22 22"><path d="M2.5 8.5l5-5h12v12l-5 5h-12z" fill="#d6ebfa" stroke="#3a8ad0" stroke-width="1.5"/><path d="M2.5 8.5h12v12M14.5 8.5l5-5" fill="none" stroke="#3a8ad0" stroke-width="1.5"/><rect x="5" y="11" width="7" height="7" fill="#f8e6d0" stroke="#555"/></svg>
<!-- right toolbar icons -->
<svg style="left:1061px;top:172px" width="22" height="22" viewBox="0 0 22 22"><path d="M2 2v18M20 2v18" stroke="#555" stroke-width="1.6"/><path d="M2 9h18" stroke="#3a8ad0" stroke-width="1.6"/></svg>
<svg style="left:1061px;top:200px" width="22" height="22" viewBox="0 0 22 22"><path d="M1 7l7-6M14 21l7-6" stroke="#555" stroke-width="1.6"/><path d="M4 4l14 14" stroke="#3a8ad0" stroke-width="1.6"/></svg>
<svg style="left:1061px;top:229px" width="22" height="22" viewBox="0 0 22 22"><path d="M3 20A17 17 0 0 1 20 3" fill="none" stroke="#3a8ad0" stroke-width="4" opacity=".55"/><path d="M3 20A17 17 0 0 1 20 3" fill="none" stroke="#3a8ad0" stroke-width="1.5"/><path d="M1 21h6M20 1v6" stroke="#555" stroke-width="1.6"/></svg>
<svg style="left:1061px;top:257px" width="22" height="22" viewBox="0 0 22 22"><path d="M2 1v20h19M2 13h17" fill="none" stroke="#555" stroke-width="1.5"/><path d="M11 5v16" stroke="#3a8ad0" stroke-width="1.6"/><text x="13" y="6" font-size="6" fill="#3a8ad0" font-family="Liberation Sans">X</text><text x="17" y="13" font-size="6" fill="#3a8ad0" font-family="Liberation Sans">Y</text></svg>
<svg style="left:1061px;top:291px" width="22" height="22" viewBox="0 0 22 22"><path d="M2 20A18 18 0 0 1 20 2" fill="none" stroke="#555" stroke-width="1.6"/><path d="M6 8l10 10" stroke="#3a8ad0" stroke-width="1.6"/></svg>
<svg style="left:1061px;top:319px" width="22" height="22" viewBox="0 0 22 22"><path d="M2 20A18 18 0 0 1 20 2" fill="none" stroke="#555" stroke-width="1.6"/><path d="M7 8l6 5-3 1 8 6" fill="none" stroke="#3a8ad0" stroke-width="1.6"/></svg>
<svg style="left:1061px;top:347px" width="22" height="22" viewBox="0 0 22 22"><circle cx="11" cy="11" r="9" fill="none" stroke="#555" stroke-width="1.6"/><path d="M5 5l12 12" stroke="#3a8ad0" stroke-width="1.6"/></svg>
<svg style="left:1061px;top:375px" width="22" height="22" viewBox="0 0 22 22"><path d="M2 20h19M2 20L14 4" fill="none" stroke="#555" stroke-width="1.6"/><path d="M11 8a12 12 0 0 1 7 12" fill="none" stroke="#3a8ad0" stroke-width="1.6"/></svg>
<svg style="left:1061px;top:409px" width="22" height="22" viewBox="0 0 22 22"><path d="M2 2v18M20 2v18M2 3h18" stroke="#555" stroke-width="1.6"/><path d="M12 7l-4 5h3l-2 5 5-6h-3z" fill="#f0a818"/></svg>
<svg style="left:1061px;top:437px" width="22" height="22" viewBox="0 0 22 22"><path d="M2 2v18M13 10v10M21 2v8" stroke="#555" stroke-width="1.6"/><path d="M2 6h19M2 16h11" stroke="#3a8ad0" stroke-width="1.5"/></svg>
<svg style="left:1061px;top:465px" width="22" height="22" viewBox="0 0 22 22"><path d="M2 2v18M11 2v18M20 2v18" stroke="#555" stroke-width="1.6"/><path d="M2 9h18" stroke="#3a8ad0" stroke-width="1.5"/></svg>
<svg style="left:1061px;top:493px" width="22" height="22" viewBox="0 0 22 22"><path d="M2 3v16M20 3v16M2 4h18M2 18h18" stroke="#555" stroke-width="1.5"/><rect x="8" y="6" width="6" height="10" fill="#f0a818"/></svg>
<svg style="left:1061px;top:521px" width="22" height="22" viewBox="0 0 22 22"><path d="M10 1v17M5 18h10M7 21h6" stroke="#555" stroke-width="1.6"/><path d="M1 10h20" stroke="#3a8ad0" stroke-width="1.5"/><path d="M14 6l6 4-6 4z" fill="#3a8ad0"/></svg>
<svg style="left:1061px;top:554px" width="22" height="22" viewBox="0 0 22 22"><rect x="1.5" y="3.5" width="19" height="14" fill="#f4f4f4" stroke="#333" stroke-width="1.2"/><path d="M11 3.5v14" stroke="#333"/><path d="M6 6v9M2.5 10.5h7" stroke="#111" stroke-width="1.5"/><text x="13" y="15" font-size="10" font-weight="bold" fill="#111" font-family="Liberation Sans">1</text></svg>
<svg style="left:1061px;top:582px" width="22" height="22" viewBox="0 0 22 22"><circle cx="11" cy="11" r="9" fill="#f4f4f4" stroke="#555" stroke-width="1.5"/><path d="M11 7v8M7 11h8" stroke="#3a8ad0" stroke-width="1.8"/></svg>
<svg style="left:1061px;top:610px" width="22" height="22" viewBox="0 0 22 22"><path d="M2 2v19M20 2v19M2 4h18" stroke="#555" stroke-width="1.5"/><path d="M7 14l3 3 6-6" fill="none" stroke="#20b040" stroke-width="2.2"/></svg>
<svg style="left:1061px;top:638px" width="22" height="22" viewBox="0 0 22 22"><path d="M1 12l6 4 4-12 3 14 7-8" fill="none" stroke="#555" stroke-width="1.6"/><path d="M1 12l4-1v4z" fill="#555"/></svg>
<svg style="left:1061px;top:671px" width="22" height="22" viewBox="0 0 22 22"><path d="M2 12v9M20 12v9M2 17h18" stroke="#555" stroke-width="1.6"/><path d="M8 13l7-9 3 3-7 8z" fill="#f2c04a"/><path d="M15 4l2-2 3 3-2 2z" fill="#e04050"/></svg>
<svg style="left:1061px;top:699px" width="22" height="22" viewBox="0 0 22 22"><path d="M2 12v9M20 12v9M2 17h18" stroke="#555" stroke-width="1.6"/><text x="11" y="12" font-size="12" font-weight="bold" fill="#555" text-anchor="middle" font-family="Liberation Sans">A</text></svg>
<!-- bottom gray area -->
<div class="a" style="left:32px;top:724px;width:1060px;height:5px;background:#f4f4f4"></div>
<div class="a" style="left:0;top:729px;width:1092px;height:1px;background:#5a5a5a"></div>
<div class="a" style="left:0;top:730px;width:1092px;height:41px;background:#c6c6c6"></div>
<!-- command line -->
<div class="a" style="left:0;top:729px;width:30px;height:69px;background:linear-gradient(#6e6e6e,#555 40%,#3a3a3a)"></div>
<svg style="left:4px;top:735px" width="24" height="6"><rect x="1" y="0" width="2" height="2" fill="#a4a4a4"/><rect x="5" y="0" width="2" height="2" fill="#a4a4a4"/><rect x="9" y="0" width="2" height="2" fill="#a4a4a4"/><rect x="13" y="0" width="2" height="2" fill="#a4a4a4"/><rect x="17" y="0" width="2" height="2" fill="#a4a4a4"/><rect x="21" y="0" width="2" height="2" fill="#a4a4a4"/><rect x="1" y="4" width="2" height="2" fill="#a4a4a4"/><rect x="5" y="4" width="2" height="2" fill="#a4a4a4"/><rect x="9" y="4" width="2" height="2" fill="#a4a4a4"/><rect x="13" y="4" width="2" height="2" fill="#a4a4a4"/><rect x="17" y="4" width="2" height="2" fill="#a4a4a4"/><rect x="21" y="4" width="2" height="2" fill="#a4a4a4"/></svg>
<svg style="left:8px;top:751px" width="14" height="12" viewBox="0 0 14 12"><path d="M2 1l10 10M12 1L2 11" stroke="#fff" stroke-width="2.2"/></svg>
<svg style="left:5px;top:774px" width="20" height="20" viewBox="0 0 20 20"><path d="M3 4.5a5 5 0 0 0 6.5 5.5l7.5 7.5 2-2-7.5-7.5a5 5 0 0 0-5.5-6.5l3 3-1 2.5-2.5 1z" fill="#e8e8e8"/></svg>
<div class="a" style="left:30px;top:771px;width:1062px;height:27px;background:#fff"></div>
<div class="a" style="left:430px;top:770px;width:662px;height:1px;background:#707070"></div>
<div class="a" style="left:36px;top:776px;width:19px;height:17px;background:linear-gradient(#f4f4f4,#d4d4d4);border:1px solid #b0b0b0;border-radius:2px"></div>
<svg style="left:39px;top:779px" width="14" height="12" viewBox="0 0 14 12"><path d="M1 2l4 3-4 3" fill="none" stroke="#333" stroke-width="1.6"/><path d="M7 10h6" stroke="#333" stroke-width="1.4"/></svg>
<svg style="left:59px;top:784px" width="7" height="4" viewBox="0 0 7 4"><path d="M0 0h7l-3.5 4z" fill="#888"/></svg>
<div class="t" style="left:70px;top:781px;font-size:14px;color:#111">TR</div>
<!-- layout tabs -->
<div class="a" style="left:0;top:798px;width:1092px;height:36px;background:#b6b6b6"></div>
<div class="a" style="left:0;top:797px;width:1092px;height:1px;background:#6a6a6a"></div>
<svg style="left:0;top:798px" width="440" height="30" viewBox="0 0 440 30">
<path d="M70 0C78 0 76 24 86 24H134C144 24 142 0 150 0z" fill="#d8d8d8"/>
<path d="M140 0C148 0 146 24 156 24H204C214 24 212 0 220 0z" fill="#d8d8d8"/>
<path d="M212 0C220 0 218 24 226 24H240C248 24 246 0 254 0z" fill="#d8d8d8"/>
<path d="M6 0C14 0 12 24 22 24H66C76 24 74 0 80 0z" fill="#f4f4f4"/>
</svg>
<div class="t" style="left:30px;top:803px;font-size:15px;color:#111;font-weight:bold">模型</div>
<div class="t" style="left:90px;top:803px;font-size:15px;color:#666">布局1</div>
<div class="t" style="left:160px;top:803px;font-size:15px;color:#666">布局2</div>
<svg style="left:226px;top:805px" width="12" height="12" viewBox="0 0 12 12"><path d="M6 0v12M0 6h12" stroke="#444" stroke-width="2.4"/></svg>
<!-- status bar -->
<div class="a" style="left:437px;top:798px;width:655px;height:36px;background:#e6e6e6"></div>
<div class="a" style="left:437px;top:798px;width:1px;height:36px;background:#999"></div>
<div class="t" style="left:443px;top:808px;font-size:15px;color:#111;font-weight:bold">模型</div>
<div class="a" style="left:477px;top:802px;width:28px;height:27px;background:#cde4f7;border:1px solid #7fa9d2"></div>
<svg style="left:480px;top:805px" width="22" height="22" viewBox="0 0 22 22"><path d="M7 2v18M11 2v18M15 2v18M2 7h18M2 11h18M2 15h18" stroke="#333" stroke-width="1.3"/></svg>
<svg style="left:512px;top:807px" width="18" height="18" viewBox="0 0 18 18"><g fill="#555"><rect x="1" y="1" width="3" height="3"/><rect x="7" y="1" width="3" height="3"/><rect x="13" y="1" width="3" height="3"/><rect x="1" y="7" width="3" height="3"/><rect x="7" y="7" width="3" height="3"/><rect x="13" y="7" width="3" height="3"/><rect x="1" y="13" width="3" height="3"/><rect x="7" y="13" width="3" height="3"/><rect x="13" y="13" width="3" height="3"/></g></svg>
<svg style="left:541px;top:813px" width="9" height="6" viewBox="0 0 9 6"><path d="M0 0h9l-4.5 6z" fill="#111"/></svg>
<div class="a" style="left:559px;top:802px;width:28px;height:27px;background:#cde4f7;border:1px solid #7fa9d2"></div>
<svg style="left:563px;top:805px" width="22" height="22" viewBox="0 0 22 22"><path d="M3 1v18h16M3 14h4v5" fill="none" stroke="#333" stroke-width="1.3"/></svg>
<svg style="left:591px;top:805px" width="24" height="22" viewBox="0 0 24 22"><circle cx="11" cy="12" r="8" fill="none" stroke="#666" stroke-width="1.3"/><path d="M11 12L20 4M11 12h11" stroke="#666" stroke-width="1.3"/></svg>
<svg style="left:623px;top:813px" width="9" height="6" viewBox="0 0 9 6"><path d="M0 0h9l-4.5 6z" fill="#111"/></svg>
<div class="a" style="left:639px;top:802px;width:28px;height:27px;background:#cde4f7;border:1px solid #7fa9d2"></div>
<svg style="left:642px;top:805px" width="22" height="22" viewBox="0 0 22 22"><path d="M2 18L18 4M2 19h18" stroke="#333" stroke-width="1.3"/><rect x="8" y="11" width="3" height="3" fill="#333"/></svg>
<div class="a" style="left:669px;top:802px;width:28px;height:27px;background:#cde4f7;border:1px solid #7fa9d2"></div>
<svg style="left:672px;top:805px" width="22" height="22" viewBox="0 0 22 22"><rect x="5.5" y="5.5" width="14" height="14" fill="none" stroke="#333" stroke-width="1.3"/><rect x="2.5" y="2.5" width="5" height="5" fill="#cde4f7" stroke="#333" stroke-width="1.2"/></svg>
<svg style="left:703px;top:813px" width="9" height="6" viewBox="0 0 9 6"><path d="M0 0h9l-4.5 6z" fill="#111"/></svg>
<div class="a" style="left:721px;top:802px;width:28px;height:27px;background:#cde4f7;border:1px solid #7fa9d2"></div>
<svg style="left:724px;top:805px" width="22" height="22" viewBox="0 0 22 22"><path d="M11 2l8 4.5v9L11 20l-8-4.5v-9z" fill="none" stroke="#444" stroke-width="1.3"/><path d="M11 6v6l-5 3M11 12l5 3" stroke="#444" stroke-width="1.3"/><circle cx="11" cy="6" r="2" fill="#fff" stroke="#444"/><circle cx="6" cy="15" r="2" fill="#fff" stroke="#444"/><circle cx="16" cy="15" r="2" fill="#fff" stroke="#444"/></svg>
<svg style="left:755px;top:813px" width="9" height="6" viewBox="0 0 9 6"><path d="M0 0h9l-4.5 6z" fill="#111"/></svg>
<div class="a" style="left:773px;top:802px;width:28px;height:27px;background:#cde4f7;border:1px solid #7fa9d2"></div>
<svg style="left:775px;top:805px" width="24" height="22" viewBox="0 0 24 22"><path d="M10 2l3 9 7 7-9-3-9 3 6-7z" fill="#333"/><circle cx="18" cy="5" r="3" fill="#fff" stroke="#333" stroke-width="1.2"/></svg>
<svg style="left:806px;top:805px" width="22" height="22" viewBox="0 0 22 22"><path d="M10 3l3 8 7 7-9-3-9 3 6-7z" fill="#666"/><path d="M17 1l-3 5h3l-2 5" fill="none" stroke="#666" stroke-width="1.3"/></svg>
<svg style="left:835px;top:805px" width="22" height="22" viewBox="0 0 22 22"><path d="M11 2l3 9 7 7-10-3-10 3 7-7z" fill="#666"/></svg>
<div class="t" style="left:867px;top:810px;font-size:14px;color:#111">1:1</div>
<svg style="left:889px;top:813px" width="9" height="6" viewBox="0 0 9 6"><path d="M0 0h9l-4.5 6z" fill="#111"/></svg>
<svg style="left:910px;top:805px" width="22" height="22" viewBox="0 0 22 22"><path d="M11 1.5l2 3 3.5-1 .5 3.5 3.5 1-1.5 3 1.5 3-3.5 1-.5 3.5-3.5-1-2 3-2-3-3.5 1-.5-3.5-3.5-1 1.5-3-1.5-3 3.5-1 .5-3.5 3.5 1z" fill="#555"/><circle cx="11" cy="11" r="3" fill="#e6e6e6"/></svg>
<svg style="left:942px;top:813px" width="9" height="6" viewBox="0 0 9 6"><path d="M0 0h9l-4.5 6z" fill="#111"/></svg>
<svg style="left:959px;top:805px" width="22" height="22" viewBox="0 0 22 22"><path d="M11 1v20M1 11h20" stroke="#555" stroke-width="2.4"/></svg>
<svg style="left:992px;top:805px" width="24" height="24" viewBox="0 0 24 24"><rect x="1.5" y="1.5" width="7" height="7" fill="none" stroke="#555" stroke-width="1.2"/><circle cx="17" cy="11" r="5" fill="none" stroke="#555" stroke-width="1.2"/><path d="M8 14l5 8H3z" fill="none" stroke="#555" stroke-width="1.2"/></svg>
<svg style="left:1033px;top:807px" width="22" height="18" viewBox="0 0 22 18"><rect x="1" y="1" width="20" height="16" fill="none" stroke="#555" stroke-width="1.3"/><path d="M4 14l5-5M4 14h4M4 14v-4M18 4l-5 5M18 4h-4M18 4v4" stroke="#555" stroke-width="1.3"/></svg>
<svg style="left:1063px;top:806px" width="22" height="20" viewBox="0 0 22 20"><path d="M0 2h22M0 10h22M0 18h22" stroke="#444" stroke-width="2.2"/></svg>
<!-- popup -->
<div class="a" style="left:30px;top:533px;width:400px;height:238px;background:linear-gradient(#6c6c6c,#737373);border:1px solid #1c1c1c"></div>
<div class="a" style="left:31px;top:534px;width:398px;height:29px;background:linear-gradient(#b0c6e6,#93acd0 50%,#7b94b8)"></div>
<div class="a" style="left:31px;top:563px;width:398px;height:1px;background:#2a2a2a"></div>
<div class="a" style="left:29px;top:530px;width:163px;height:34px;border:4px solid #f50a0a;border-radius:9px"></div>
<svg style="left:34px;top:536px" width="22" height="26" viewBox="0 0 22 26"><path d="M3.5 6.5l7.5 8M11.5 2.5v10.5" stroke="#1e2a40" stroke-width="2"/><circle cx="10.5" cy="20" r="3" fill="none" stroke="#1e2a40" stroke-width="1.5"/><circle cx="16" cy="17" r="3" fill="none" stroke="#1e2a40" stroke-width="1.5"/></svg>
<div class="t" style="left:61px;top:542px;font-size:15px;color:#f4f4f4;font-family:'Liberation Mono',monospace">TR (TRIM)</div>
<svg style="left:378px;top:537px" width="22" height="22" viewBox="0 0 22 22"><circle cx="11" cy="11" r="9.5" fill="#e8ecf4" stroke="#223" stroke-width="1.6"/><text x="11" y="16.5" font-size="15" font-weight="bold" text-anchor="middle" fill="#2a3a90" font-family="Liberation Sans">?</text></svg>
<svg style="left:403px;top:537px" width="22" height="22" viewBox="0 0 22 22"><circle cx="11" cy="11" r="9.5" fill="#dfe6e6" stroke="#556" stroke-width="1.6"/><path d="M6 8c2-3 6-3 8-1" fill="none" stroke="#555" stroke-width="1.5"/><circle cx="15" cy="15" r="3" fill="#fff" stroke="#666"/><path d="M17 17l3 3" stroke="#666" stroke-width="1.5"/></svg>
<div class="t" style="left:61px;top:572px;font-size:15px;color:#f4f4f4;font-family:'Liberation Mono',monospace">TREESTAT</div>
<div class="t" style="left:61px;top:602px;font-size:15px;color:#f4f4f4;font-family:'Liberation Mono',monospace">TRANSMIT (ETI</div>
<div class="t" style="left:61px;top:632px;font-size:15px;color:#f4f4f4;font-family:'Liberation Mono',monospace">TRANSPARENCY</div>
<div class="t" style="left:61px;top:662px;font-size:15px;color:#f4f4f4;font-family:'Liberation Mono',monospace">TRAYSETTINGS</div>
<div class="t" style="left:61px;top:692px;font-size:15px;color:#f4f4f4;font-family:'Liberation Mono',monospace">TREX</div>
<svg style="left:35px;top:597px" width="22" height="22" viewBox="0 0 22 22"><rect x="3" y="2" width="6" height="8" fill="#f4f4f4"/><rect x="3" y="13" width="16" height="6" fill="#f4f4f4"/><rect x="5" y="15" width="3" height="2" fill="#333"/><circle cx="14" cy="7" r="5" fill="#6aa0d8" opacity=".8"/></svg>
<svg style="left:34px;top:626px" width="22" height="22" viewBox="0 0 22 22"><rect x="1" y="2" width="17" height="15" fill="#3a8ad8"/><path d="M2 16l5-6 4 4 3-3 4 5z" fill="#9cd0f4"/><circle cx="13" cy="6" r="2" fill="#fff"/><rect x="12" y="12" width="9" height="9" fill="#6aa0d8" opacity=".9"/></svg>
<div class="a" style="left:31px;top:713px;width:398px;height:1px;background:#262626"></div>
<div class="a" style="left:31px;top:714px;width:398px;height:27px;background:#575757"></div>
<div class="a" style="left:31px;top:741px;width:398px;height:1px;background:#262626"></div>
<div class="a" style="left:31px;top:742px;width:398px;height:28px;background:#575757"></div>
<svg style="left:34px;top:718px" width="22" height="18" viewBox="0 0 22 18"><rect x="1.5" y="2.5" width="19" height="13" fill="#4e5660" stroke="#666a70"/><rect x="5" y="6" width="12" height="6" fill="#5a6878"/></svg>
<div class="t" style="left:60px;top:722px;font-size:16px;color:#2a2a2a;font-weight:bold">TRIMMODE</div>
<svg style="left:34px;top:745px" width="20" height="22" viewBox="0 0 20 22"><rect x="1" y="1" width="18" height="20" fill="#a8a8a8"/><path d="M3 7h5M11 7h6M3 14h5M11 14h6" stroke="#444" stroke-width="1.6"/><path d="M1 10.5h18" stroke="#575757" stroke-width="1.2"/></svg>
<div class="t" style="left:61px;top:749px;font-size:15.5px;color:#2a2a2a;font-weight:bold">图案填充: TRANS</div>
<svg style="left:413px;top:723px" width="8" height="8" viewBox="0 0 8 8"><path d="M4 0v8M0 4h8" stroke="#8e8e8e" stroke-width="2.2"/></svg>
<svg style="left:413px;top:751px" width="8" height="8" viewBox="0 0 8 8"><path d="M4 0v8M0 4h8" stroke="#8e8e8e" stroke-width="2.2"/></svg>
<!-- tooltip -->
<div class="a" style="left:171px;top:578px;width:212px;height:104px;background:#f1f1f6"></div>
<div class="t" style="left:180px;top:590px;font-size:15px;color:#555">修剪对象以适合其他对象的边</div>
<div class="a" style="left:171px;top:617px;width:212px;height:1px;background:#b8bcc6"></div>
<svg style="left:180px;top:624px" width="21" height="19" viewBox="0 0 21 19"><rect x="0.5" y="0.5" width="18" height="16" fill="#f4f0a0" stroke="#2a3a8a"/><rect x="0.5" y="0.5" width="18" height="3" fill="#3a4aa0"/><rect x="3" y="11" width="18" height="8" fill="#111"/><rect x="5" y="13" width="4" height="1.5" fill="#fff"/></svg>
<div class="t" style="left:206px;top:627px;font-size:15px;color:#555;font-weight:bold">TRIM</div>
<div class="t" style="left:180px;top:655px;font-size:15px;color:#555;font-weight:bold">按 F1 键获得更多帮助</div>
</body></html>
